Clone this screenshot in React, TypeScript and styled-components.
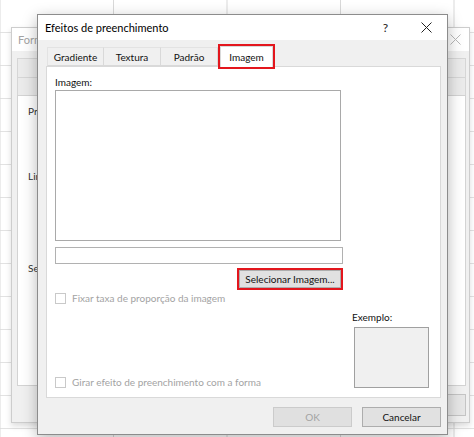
import React from 'react'
import styled, { createGlobalStyle } from 'styled-components'

const GlobalStyle = createGlobalStyle`
  html, body {
    margin: 0;
    padding: 0;
  }
  body {
    font-family: Lato, "Noto Sans", sans-serif;
    background: #fff;
    overflow: hidden;
  }
  * {
    box-sizing: border-box;
  }
`

// spreadsheet grid behind the windows
const Desktop = styled.div`
  position: relative;
  width: 474px;
  height: 437px;
  overflow: hidden;
  background-color: #fff;
  background-image:
    linear-gradient(to right, #d9d9d9 1px, transparent 1px),
    linear-gradient(to bottom, #e2e2e2 1px, transparent 1px);
  background-size: 113.5px 100%, 100% 33px;
  background-position: 113px 0, 0 32px;
`

/* ---------- window behind ---------- */

const BackWindow = styled.div`
  position: absolute;
  left: 11px;
  top: 27px;
  width: 459px;
  height: 396px;
  background: #f0f0f0;
  border: 1px solid #cdcdcd;
  box-shadow: 0 3px 6px rgba(0, 0, 0, 0.14);
  display: flex;
  flex-direction: column;
`

const BackTitleBar = styled.div`
  height: 23px;
  background: #fff;
  display: flex;
  align-items: center;
  justify-content: space-between;
  padding: 0 8px 0 6px;
  font-size: 11px;
  color: #a3a3a3;
`

const BackBody = styled.div`
  flex: 1;
  display: flex;
  flex-direction: column;
  padding: 7px 3px 0 5px;
`

const BackHeaderRow = styled.div<{ $h: number }>`
  height: ${p => p.$h}px;
  background: #ebebeb;
  border: 1px solid #d6d6d6;
  border-bottom: none;
`

const BackPanel = styled.div`
  height: 291px;
  background: #fff;
  border: 1px solid #d3d3d3;
  padding: 8px 0 0 10px;
  display: flex;
  flex-direction: column;
`

const BackLabel = styled.div<{ $top: number }>`
  margin-top: ${p => p.$top}px;
  font-size: 10px;
  line-height: 14px;
  color: #333;
`

const BackFooter = styled.div`
  display: flex;
  justify-content: flex-end;
  padding-top: 8px;
`

const BackButton = styled.div`
  width: 80px;
  height: 22px;
  background: #e6e6e6;
  border: 1px solid #c4c4c4;
`

/* ---------- front dialog ---------- */

const Dialog = styled.div`
  position: absolute;
  left: 37px;
  top: 14px;
  width: 411px;
  height: 421px;
  background: #f0f0f0;
  border: 1px solid #8c8c8c;
  box-shadow: 0 4px 14px rgba(0, 0, 0, 0.28);
  display: flex;
  flex-direction: column;
  color: #111;
`

const TitleBar = styled.div`
  height: 25px;
  flex-shrink: 0;
  background: #fff;
  display: flex;
  align-items: center;
`

const Title = styled.div`
  flex: 1;
  padding-left: 7px;
  font-size: 11px;
  color: #000;
`

const CaptionButton = styled.div`
  width: 41px;
  height: 25px;
  display: flex;
  align-items: center;
  justify-content: center;
  font-size: 12px;
  color: #222;
`

const Body = styled.div`
  flex: 1;
  display: flex;
  flex-direction: column;
  padding: 6px 6px 7px 8px;
`

const TabRow = styled.div`
  display: flex;
  align-items: flex-end;
  height: 20px;
  padding-left: 1px;
  position: relative;
  z-index: 1;
`

const Tab = styled.div<{ $w: number; $active?: boolean }>`
  width: ${p => p.$w}px;
  height: ${p => (p.$active ? 21 : 19)}px;
  margin: ${p => (p.$active ? '0 0 -1px 2px' : '0')};
  display: flex;
  align-items: center;
  justify-content: center;
  white-space: nowrap;
  font-size: 10px;
  color: #111;
  background: ${p => (p.$active ? '#fff' : '#f0f0f0')};
  border: 1px solid ${p => (p.$active ? '#d9d9d9' : '#e3e3e3')};
  border-bottom: ${p => (p.$active ? 'none' : '1px solid #d9d9d9')};
  border-left: ${p => (p.$active ? '1px solid #d9d9d9' : 'none')};
  border-right-color: #d9d9d9;
  &:first-child {
    border-left: 1px solid #e3e3e3;
  }
  outline: ${p => (p.$active ? '2.5px solid #e3161d' : 'none')};
  outline-offset: 0.5px;
`

const Panel = styled.div`
  height: 332px;
  background: #fff;
  border: 1px solid #d9d9d9;
  padding: 8px 10px 9px 8px;
  display: flex;
  flex-direction: column;
`

const FieldLabel = styled.div`
  font-size: 10px;
  line-height: 14px;
  color: #111;
  white-space: nowrap;
`

const ImageBox = styled.div`
  width: 286px;
  height: 151px;
  margin-top: 1px;
  background: #fff;
  border: 1px solid #a9a9a9;
`

const TextField = styled.div`
  width: 288px;
  height: 17px;
  margin-top: 6px;
  background: #fff;
  border: 1px solid #b1b1b1;
`

const ButtonRow = styled.div`
  width: 288px;
  display: flex;
  justify-content: flex-end;
  padding-right: 2px;
  margin-top: 6px;
`

const PushButton = styled.div<{ $w: number; $h: number; $disabled?: boolean; $marked?: boolean }>`
  width: ${p => p.$w}px;
  height: ${p => p.$h}px;
  display: flex;
  align-items: center;
  justify-content: center;
  white-space: nowrap;
  font-size: 10px;
  color: ${p => (p.$disabled ? '#a3a3a3' : '#111')};
  background: ${p => (p.$disabled ? '#e0e0e0' : '#e1e1e1')};
  border: 1px solid ${p => (p.$disabled ? '#cbcbcb' : '#adadad')};
  outline: ${p => (p.$marked ? '2.5px solid #e3161d' : 'none')};
  outline-offset: 0.5px;
`

const CheckRow = styled.div<{ $top?: number }>`
  display: flex;
  align-items: center;
  gap: 6px;
  height: 12px;
  margin-top: ${p => p.$top ?? 0}px;
  font-size: 10px;
  color: #a3a3a3;
  white-space: nowrap;
`

const CheckBox = styled.span`
  width: 11px;
  height: 11px;
  background: #fff;
  border: 1px solid #c9c9c9;
  flex-shrink: 0;
`

const BottomArea = styled.div`
  flex: 1;
  display: flex;
  align-items: flex-end;
  justify-content: space-between;
`

const ExampleBlock = styled.div`
  display: flex;
  flex-direction: column;
  gap: 3px;
  margin-right: 1px;
`

const ExampleLabel = styled(FieldLabel)`
  margin-left: -2px;
`

const ExampleBox = styled.div`
  width: 75px;
  height: 61px;
  background: #f0f0f0;
  border: 1px solid #a0a0a0;
`

const Footer = styled.div`
  display: flex;
  justify-content: flex-end;
  gap: 10px;
  margin-top: 9px;
`

const CloseIcon = ({ color }: { color: string }) => (
  <svg width="11" height="11" viewBox="0 0 11 11">
    <path d="M0.5 0.5 L10.5 10.5 M10.5 0.5 L0.5 10.5" stroke={color} strokeWidth="1" fill="none" />
  </svg>
)

export default function App() {
  return (
    <>
      <GlobalStyle />
      <Desktop>
        <BackWindow>
          <BackTitleBar>
            <span>Formatar</span>
            <CloseIcon color="#b8b8b8" />
          </BackTitleBar>
          <BackBody>
            <BackHeaderRow $h={19} />
            <BackHeaderRow $h={18} />
            <BackPanel>
              <BackLabel $top={0}>Preenchimento</BackLabel>
              <BackLabel $top={51}>Linha</BackLabel>
              <BackLabel $top={78}>Setas</BackLabel>
            </BackPanel>
            <BackFooter>
              <BackButton />
            </BackFooter>
          </BackBody>
        </BackWindow>

        <Dialog>
          <TitleBar>
            <Title>Efeitos de preenchimento</Title>
            <CaptionButton>?</CaptionButton>
            <CaptionButton>
              <CloseIcon color="#222" />
            </CaptionButton>
          </TitleBar>
          <Body>
            <TabRow>
              <Tab $w={57}>Gradiente</Tab>
              <Tab $w={57}>Textura</Tab>
              <Tab $w={57}>Padrão</Tab>
              <Tab $w={53} $active>
                Imagem
              </Tab>
            </TabRow>
            <Panel>
              <FieldLabel>Imagem:</FieldLabel>
              <ImageBox />
              <TextField />
              <ButtonRow>
                <PushButton $w={102} $h={18} $marked>
                  Selecionar Imagem...
                </PushButton>
              </ButtonRow>
              <CheckRow $top={4}>
                <CheckBox />
                Fixar taxa de proporção da imagem
              </CheckRow>
              <BottomArea>
                <CheckRow>
                  <CheckBox />
                  Girar efeito de preenchimento com a forma
                </CheckRow>
                <ExampleBlock>
                  <ExampleLabel>Exemplo:</ExampleLabel>
                  <ExampleBox />
                </ExampleBlock>
              </BottomArea>
            </Panel>
            <Footer>
              <PushButton $w={79} $h={20} $disabled>
                OK
              </PushButton>
              <PushButton $w={79} $h={20}>
                Cancelar
              </PushButton>
            </Footer>
          </Body>
        </Dialog>
      </Desktop>
    </>
  )
}
